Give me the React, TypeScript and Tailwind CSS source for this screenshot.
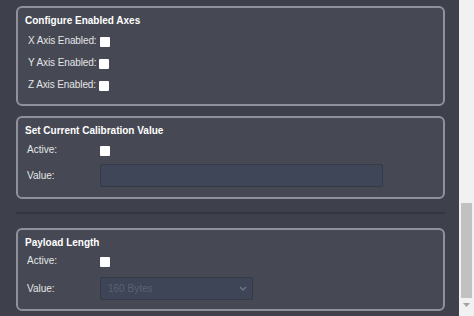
import React from 'react';

function Box() {
  return <span className="inline-block w-[10px] h-[10px] bg-white rounded-[1px] shrink-0" />;
}

function CardTitle({ children }: { children: React.ReactNode }) {
  return <h3 className="text-[10px] leading-[12px] font-bold text-white">{children}</h3>;
}

function AxisRow({ label }: { label: string }) {
  return (
    <div className="h-[22px] flex items-center pl-[3px] gap-[3px]">
      <span className="text-[10px] tracking-[-0.1px] text-[#e4e5e8]">{label}</span>
      <span className="mt-[3px] flex">
        <Box />
      </span>
    </div>
  );
}

function FieldRow({ label, children, className = '' }: { label: string; children: React.ReactNode; className?: string }) {
  return (
    <div className={`flex items-center ${className}`}>
      <span className="w-[75px] pl-[2px] text-[10px] text-[#e4e5e8]">{label}</span>
      {children}
    </div>
  );
}

export default function App() {
  return (
    <div
      className="w-[474px] h-[316px] flex overflow-hidden bg-[#3e414c]"
      style={{ fontFamily: '"Liberation Sans", Arial, sans-serif' }}
    >
      <main className="flex-1 flex flex-col pt-[6px] pl-4 pr-[14px]">
        {/* axes */}
        <section className="h-[100px] shrink-0 border-2 border-[#8f929c] rounded-[6px] bg-[#464953] pl-[7px] pt-[7px]">
          <CardTitle>Configure Enabled Axes</CardTitle>
          <div className="mt-[2px]">
            <AxisRow label="X Axis Enabled:" />
            <AxisRow label="Y Axis Enabled:" />
            <AxisRow label="Z Axis Enabled:" />
          </div>
        </section>

        {/* calibration */}
        <section className="mt-[10px] h-[83px] shrink-0 border-2 border-[#8f929c] rounded-[6px] bg-[#464953] pl-[7px] pt-[7px]">
          <CardTitle>Set Current Calibration Value</CardTitle>
          <FieldRow label="Active:" className="h-[18px] mt-[3px]">
            <span className="mt-[4px] flex">
              <Box />
            </span>
          </FieldRow>
          <FieldRow label="Value:" className="mt-[6px]">
            <input
              type="text"
              className="w-[283px] h-[23px] bg-[#3f4657] border border-[#353a47] rounded-[2px] outline-none"
            />
          </FieldRow>
        </section>

        <div className="mt-[13px] h-[2px] shrink-0 bg-[#33363f]" />

        {/* payload */}
        <section className="mt-[14px] h-[83px] shrink-0 border-2 border-[#8f929c] rounded-[6px] bg-[#464953] pl-[7px] pt-[7px]">
          <CardTitle>Payload Length</CardTitle>
          <FieldRow label="Active:" className="h-[18px] mt-[2px]">
            <span className="mt-[4px] flex">
              <Box />
            </span>
          </FieldRow>
          <FieldRow label="Value:" className="mt-[8px]">
            <div className="w-[153px] h-[23px] bg-[#3e4556] border border-[#353a47] rounded-[2px] flex items-center justify-between pl-[7px] pr-[5px]">
              <span className="text-[10px] text-[#5b6272]">160 Bytes</span>
              <svg width="8" height="5" viewBox="0 0 8 5" fill="none">
                <path d="M1 1l3 3 3-3" stroke="#707787" strokeWidth="1.3" />
              </svg>
            </div>
          </FieldRow>
        </section>
      </main>

      {/* scrollbar */}
      <div className="w-[15px] shrink-0 bg-[#f1f1f1] flex flex-col">
        <div className="h-[203px]" />
        <div className="mx-[2px] h-[95px] bg-[#c1c1c1]" />
        <div className="flex-1 flex items-start justify-center pt-[5px]">
          <svg width="7" height="4" viewBox="0 0 7 4">
            <path d="M0 0h7L3.5 4z" fill="#a3a3a3" />
          </svg>
        </div>
      </div>
    </div>
  );
}
